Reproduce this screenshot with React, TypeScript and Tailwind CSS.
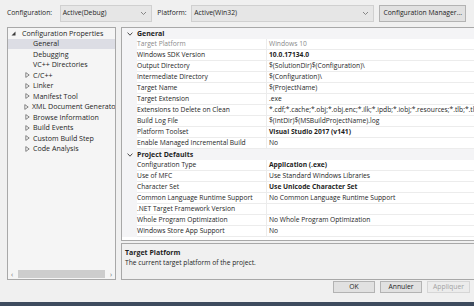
import React from "react";

type TreeItem = { label: string; level: number; arrow?: "open" | "closed"; selected?: boolean };

const tree: TreeItem[] = [
  { label: "Configuration Properties", level: 0, arrow: "open" },
  { label: "General", level: 1, selected: true },
  { label: "Debugging", level: 1 },
  { label: "VC++ Directories", level: 1 },
  { label: "C/C++", level: 1, arrow: "closed" },
  { label: "Linker", level: 1, arrow: "closed" },
  { label: "Manifest Tool", level: 1, arrow: "closed" },
  { label: "XML Document Generator", level: 1, arrow: "closed" },
  { label: "Browse Information", level: 1, arrow: "closed" },
  { label: "Build Events", level: 1, arrow: "closed" },
  { label: "Custom Build Step", level: 1, arrow: "closed" },
  { label: "Code Analysis", level: 1, arrow: "closed" },
];

type Row =
  | { kind: "header"; label: string }
  | { kind: "prop"; name: string; value: string; bold?: boolean; dim?: boolean };

const rows: Row[] = [
  { kind: "header", label: "General" },
  { kind: "prop", name: "Target Platform", value: "Windows 10", dim: true },
  { kind: "prop", name: "Windows SDK Version", value: "10.0.17134.0", bold: true },
  { kind: "prop", name: "Output Directory", value: "$(SolutionDir)$(Configuration)\\" },
  { kind: "prop", name: "Intermediate Directory", value: "$(Configuration)\\" },
  { kind: "prop", name: "Target Name", value: "$(ProjectName)" },
  { kind: "prop", name: "Target Extension", value: ".exe" },
  {
    kind: "prop",
    name: "Extensions to Delete on Clean",
    value: "*.cdf;*.cache;*.obj;*.obj.enc;*.ilk;*.ipdb;*.iobj;*.resources;*.tlb;*.tli;*.tlh;*.tmp",
  },
  { kind: "prop", name: "Build Log File", value: "$(IntDir)$(MSBuildProjectName).log" },
  { kind: "prop", name: "Platform Toolset", value: "Visual Studio 2017 (v141)", bold: true },
  { kind: "prop", name: "Enable Managed Incremental Build", value: "No" },
  { kind: "header", label: "Project Defaults" },
  { kind: "prop", name: "Configuration Type", value: "Application (.exe)", bold: true },
  { kind: "prop", name: "Use of MFC", value: "Use Standard Windows Libraries" },
  { kind: "prop", name: "Character Set", value: "Use Unicode Character Set", bold: true },
  { kind: "prop", name: "Common Language Runtime Support", value: "No Common Language Runtime Support" },
  { kind: "prop", name: ".NET Target Framework Version", value: "" },
  { kind: "prop", name: "Whole Program Optimization", value: "No Whole Program Optimization" },
  { kind: "prop", name: "Windows Store App Support", value: "No" },
];

function Caret() {
  return (
    <svg width="7" height="5" viewBox="0 0 7 5" className="ml-auto">
      <polyline points="1,1 3.5,3.5 6,1" fill="none" stroke="#7a7a7a" strokeWidth="0.9" />
    </svg>
  );
}

function Dropdown({ value, width }: { value: string; width: string }) {
  return (
    <div className={`flex h-[17px] items-center border border-[#d0d0d0] bg-[#e6e6e6] pl-[2px] pr-[4px] ${width}`}>
      <span>{value}</span>
      <Caret />
    </div>
  );
}

function TreeArrow({ kind }: { kind?: "open" | "closed" }) {
  if (kind === "open")
    return (
      <svg width="5" height="5" viewBox="0 0 5 5">
        <polygon points="4.5,0.5 4.5,4.5 0.5,4.5" fill="#3c3c3c" />
      </svg>
    );
  if (kind === "closed")
    return (
      <svg width="5" height="6" viewBox="0 0 5 6">
        <polygon points="0.8,0.6 4.2,3 0.8,5.4" fill="none" stroke="#6a6a6a" strokeWidth="0.8" />
      </svg>
    );
  return null;
}

function Button({ label, disabled, className }: { label: string; disabled?: boolean; className: string }) {
  return (
    <div
      className={`flex items-center justify-center whitespace-nowrap border ${
        disabled ? "border-[#d6d6d6] bg-[#ececec] text-[#a3a3a3]" : "border-[#b3b3b3] bg-[#e1e1e1] text-[#1e1e1e]"
      } ${className}`}
    >
      {label}
    </div>
  );
}

export default function App() {
  return (
    <div className="flex h-[306px] w-[474px] flex-col overflow-hidden bg-[#f0f0f0] font-['Open_Sans',sans-serif] text-[7.1px] leading-none text-[#1e1e1e]">
      {/* toolbar */}
      <div className="flex h-[27px] items-center pl-[7px] pr-[8px] text-[6.8px]">
        <span className="w-[53px] whitespace-nowrap">Configuration:</span>
        <Dropdown value="Active(Debug)" width="w-[93px]" />
        <span className="ml-[5px] w-[34px]">Platform:</span>
        <Dropdown value="Active(Win32)" width="w-[184px]" />
        <Button label="Configuration Manager..." className="ml-[5px] h-[17px] w-[87px]" />
      </div>

      <div className="flex h-[253px] gap-[5px] pl-[7px] pr-[4px]">
        {/* tree */}
        <div className="flex w-[109px] flex-col border border-[#a8a8a8] bg-[#f5f5f5]">
          <div className="flex-1 overflow-hidden">
            {tree.map((t) => (
              <div
                key={t.label}
                className={`flex h-[10.5px] items-center whitespace-nowrap ${t.selected ? "bg-[#dcdde4]" : ""}`}
              >
                <div className={`flex w-[6px] justify-center ${t.level === 0 ? "ml-[2px]" : "ml-[16px]"}`}>
                  <TreeArrow kind={t.arrow} />
                </div>
                <span className={t.level === 0 ? "ml-[6px]" : "ml-[3px]"}>{t.label}</span>
              </div>
            ))}
          </div>
          <div className="flex h-[10px] items-center px-[3px] text-[#6d6d6d]">
            <span className="w-[7px] text-[7px]">‹</span>
            <div className="h-[8px] flex-1 bg-[#cdcdcd]" />
            <span className="w-[7px] text-right text-[7px]">›</span>
          </div>
        </div>

        {/* right side */}
        <div className="flex flex-1 flex-col gap-[2px]">
          <div className="h-[214px] overflow-hidden border border-[#a8a8a8] bg-white text-[6.7px]">
            {rows.map((r, i) =>
              r.kind === "header" ? (
                <div key={i} className="flex h-[11px] items-center bg-[#f4f4f6] text-[7px]">
                  <div className="flex w-[15px] justify-center">
                    <svg width="6" height="4" viewBox="0 0 6 4">
                      <polyline points="0.6,0.6 3,3.2 5.4,0.6" fill="none" stroke="#3a3a3a" strokeWidth="0.9" />
                    </svg>
                  </div>
                  <span className="font-bold">{r.label}</span>
                </div>
              ) : (
                <div key={i} className="flex h-[11px] whitespace-nowrap">
                  <div className="w-[15px] shrink-0 bg-[#f4f4f6]" />
                  <div
                    className={`flex w-[130px] shrink-0 items-center border-b border-r border-[#ececec] ${
                      r.dim ? "text-[#8a8a8a]" : ""
                    }`}
                  >
                    {r.name}
                  </div>
                  <div
                    className={`flex flex-1 items-center overflow-hidden border-b border-[#ececec] pl-[2px] ${
                      r.bold ? "font-bold" : ""
                    } ${r.dim ? "text-[#8a8a8a]" : ""}`}
                  >
                    {r.value}
                  </div>
                </div>
              )
            )}
          </div>
          <div className="flex-1 border border-[#a8a8a8] bg-[#f0f0f0] px-[3px] pt-[5px] text-[7px]">
            <div className="font-bold">Target Platform</div>
            <div className="mt-[4px] text-[6.7px]">The current target platform of the project.</div>
          </div>
        </div>
      </div>

      {/* footer buttons */}
      <div className="mt-[1px] flex justify-end gap-[5px] pr-[4px] text-[6.8px]">
        <Button label="OK" className="h-[12px] w-[42px]" />
        <Button label="Annuler" className="h-[12px] w-[42px]" />
        <Button label="Appliquer" disabled className="h-[12px] w-[43px]" />
      </div>
      <div className="flex-1" />
      <div className="h-[4px] bg-[#3e4b5e]" />
    </div>
  );
}
